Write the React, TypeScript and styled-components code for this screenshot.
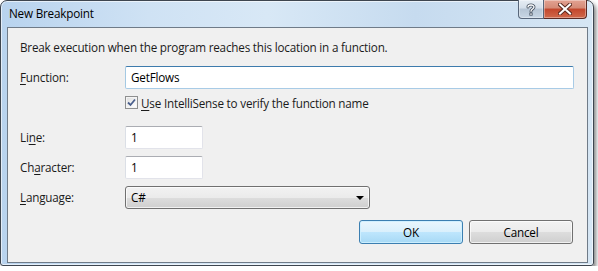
import React from "react";
import styled, { createGlobalStyle } from "styled-components";

const Global = createGlobalStyle`
  html, body {
    margin: 0;
    padding: 0;
    background: #ffffff;
  }
  body {
    font-family: "Open Sans", "Noto Sans", sans-serif;
    font-size: 11.7px;
    letter-spacing: -0.2px;
    color: #1b1b1b;
  }
`;

const Window = styled.div`
  box-sizing: border-box;
  width: 594px;
  height: 266px;
  display: flex;
  flex-direction: column;
  border: 1px solid #3e4650;
  border-radius: 7px 7px 3px 3px;
  background: linear-gradient(
    to right,
    #b8d3ee 0%,
    #cfe2f4 25%,
    #d8e8f6 45%,
    #c6dbef 70%,
    #d6e6f4 100%
  );
  box-shadow: 2px 3px 4px rgba(0, 0, 0, 0.5), inset 0 0 0 1px rgba(255, 255, 255, 0.6);
`;

const TitleBar = styled.div`
  height: 26px;
  display: flex;
  justify-content: space-between;
  align-items: flex-start;
`;

const Title = styled.div`
  padding: 4px 0 0 8px;
  line-height: 16px;
  color: #000;
`;

const CaptionButtons = styled.div`
  display: flex;
  margin-right: 6px;
  margin-top: -1px;
`;

const CaptionButton = styled.div<{ $close?: boolean }>`
  box-sizing: border-box;
  height: 19px;
  width: ${(p) => (p.$close ? "43px" : "26px")};
  display: flex;
  align-items: center;
  justify-content: center;
  border: 1px solid ${(p) => (p.$close ? "#5a2a24" : "#58667a")};
  border-top: none;
  border-left: ${(p) => (p.$close ? "none" : "1px solid #58667a")};
  border-radius: ${(p) => (p.$close ? "0 0 4px 0" : "0 0 0 4px")};
  background: ${(p) =>
    p.$close
      ? "linear-gradient(to bottom, #e3a292 0%, #d48a76 45%, #c2462c 50%, #d0694c 100%)"
      : "linear-gradient(to bottom, #e6edf4 0%, #d4dee9 45%, #b6c5d5 50%, #c8d6e4 100%)"};
  box-shadow: inset 0 0 0 1px rgba(255, 255, 255, 0.35);
`;

const Client = styled.div`
  flex: 1;
  margin: 0 5px 2px 6px;
  border: 1px solid #6f7b88;
  background: #f0f0f0;
  padding: 12px 13px 0 12px;
  display: flex;
  flex-direction: column;
`;

const Description = styled.div`
  line-height: 15px;
`;

const Row = styled.div<{ $gap: number }>`
  display: flex;
  align-items: center;
  height: 23px;
  margin-top: ${(p) => p.$gap}px;
`;

const Label = styled.div`
  width: 105px;
  flex: none;
  line-height: 15px;
`;

const Key = styled.span`
  text-decoration: underline;
  text-underline-offset: 2px;
`;

const TextBox = styled.div<{ $focused?: boolean; $width?: number }>`
  box-sizing: border-box;
  height: 23px;
  ${(p) => (p.$width ? `width: ${p.$width}px;` : "flex: 1;")}
  background: #ffffff;
  border: 1px solid ${(p) => (p.$focused ? "#a8cbe6" : "#e2e3ea")};
  border-top-color: ${(p) => (p.$focused ? "#3d7bad" : "#abadb3")};
  border-left-color: ${(p) => (p.$focused ? "#a4c9e3" : "#dbdfe6")};
  border-radius: 2px;
  padding: 0 5px;
  line-height: 21px;
  color: #000;
`;

const CheckRow = styled.div`
  display: flex;
  align-items: center;
  height: 15px;
  margin-top: 6px;
  padding-left: 105px;
`;

const CheckBox = styled.div`
  box-sizing: border-box;
  width: 13px;
  height: 13px;
  border: 1px solid #8e8f8f;
  background: linear-gradient(135deg, #dcdcdc 0%, #f4f4f4 60%, #ffffff 100%);
  box-shadow: inset 0 0 0 1px #f4f4f4;
  display: flex;
  align-items: center;
  justify-content: center;
  margin-right: 3px;
`;

const Combo = styled.div`
  box-sizing: border-box;
  width: 245px;
  height: 23px;
  display: flex;
  align-items: center;
  justify-content: space-between;
  border: 1px solid #707070;
  border-radius: 3px;
  padding: 0 4px 0 5px;
  background: linear-gradient(
    to bottom,
    #f2f2f2 0%,
    #ebebeb 50%,
    #dddddd 51%,
    #cfcfcf 100%
  );
  box-shadow: inset 0 0 0 1px rgba(255, 255, 255, 0.7);
  color: #000;
  line-height: 21px;
`;

const Arrow = styled.div`
  width: 0;
  height: 0;
  border-left: 4px solid transparent;
  border-right: 4px solid transparent;
  border-top: 4px solid #000;
  margin-right: 1px;
`;

const ButtonRow = styled.div`
  display: flex;
  justify-content: flex-end;
  gap: 6px;
  margin-top: 11px;
  margin-right: 1px;
`;

const Button = styled.div<{ $default?: boolean }>`
  box-sizing: border-box;
  width: 104px;
  height: 24px;
  display: flex;
  align-items: center;
  justify-content: center;
  border: 1px solid ${(p) => (p.$default ? "#3c7fb1" : "#707070")};
  border-radius: 3px;
  background: ${(p) =>
    p.$default
      ? "linear-gradient(to bottom, #eaf6fd 0%, #d9f0fc 50%, #bee6fd 51%, #a7d9f5 100%)"
      : "linear-gradient(to bottom, #f2f2f2 0%, #ebebeb 50%, #dddddd 51%, #cfcfcf 100%)"};
  box-shadow: inset 0 0 0 1px
    ${(p) => (p.$default ? "rgba(206, 240, 255, 0.9)" : "rgba(255, 255, 255, 0.7)")};
  color: #000;
`;

function HelpGlyph() {
  return (
    <svg width="10" height="13" viewBox="0 0 10 13">
      <path
        d="M2 4 C2 1.5 8 1.2 8 4 C8 6 5 6 5 8.2"
        fill="none"
        stroke="#4a5564"
        strokeWidth="3"
        strokeLinecap="round"
      />
      <path
        d="M2 4 C2 1.5 8 1.2 8 4 C8 6 5 6 5 8.2"
        fill="none"
        stroke="#ffffff"
        strokeWidth="1.3"
        strokeLinecap="round"
      />
      <rect x="3.4" y="9.6" width="3.2" height="3" fill="#4a5564" />
      <rect x="4.3" y="10.4" width="1.4" height="1.4" fill="#ffffff" />
    </svg>
  );
}

function CloseGlyph() {
  return (
    <svg width="14" height="12" viewBox="0 0 14 12">
      <path d="M2 1.5 L12 10.5 M12 1.5 L2 10.5" stroke="#5b2a20" strokeWidth="4" strokeLinecap="square" />
      <path d="M2 1.5 L12 10.5 M12 1.5 L2 10.5" stroke="#ffffff" strokeWidth="2" strokeLinecap="square" />
    </svg>
  );
}

function CheckGlyph() {
  return (
    <svg width="9" height="9" viewBox="0 0 9 9">
      <path d="M1 4.5 L3.5 7 L8 1.5" fill="none" stroke="#4a5f8c" strokeWidth="1.8" />
    </svg>
  );
}

export default function App() {
  return (
    <>
      <Global />
      <Window>
        <TitleBar>
          <Title>New Breakpoint</Title>
          <CaptionButtons>
            <CaptionButton>
              <HelpGlyph />
            </CaptionButton>
            <CaptionButton $close>
              <CloseGlyph />
            </CaptionButton>
          </CaptionButtons>
        </TitleBar>
        <Client>
          <Description>Break execution when the program reaches this location in a function.</Description>
          <Row $gap={11}>
            <Label>
              <Key>F</Key>unction:
            </Label>
            <TextBox $focused>GetFlows</TextBox>
          </Row>
          <CheckRow>
            <CheckBox>
              <CheckGlyph />
            </CheckBox>
            <span>
              <Key>U</Key>se IntelliSense to verify the function name
            </span>
          </CheckRow>
          <Row $gap={16}>
            <Label>
              Li<Key>n</Key>e:
            </Label>
            <TextBox $width={78}>1</TextBox>
          </Row>
          <Row $gap={7}>
            <Label>
              Ch<Key>a</Key>racter:
            </Label>
            <TextBox $width={78}>1</TextBox>
          </Row>
          <Row $gap={7}>
            <Label>
              <Key>L</Key>anguage:
            </Label>
            <Combo>
              <span>C#</span>
              <Arrow />
            </Combo>
          </Row>
          <ButtonRow>
            <Button $default>OK</Button>
            <Button>Cancel</Button>
          </ButtonRow>
        </Client>
      </Window>
    </>
  );
}
